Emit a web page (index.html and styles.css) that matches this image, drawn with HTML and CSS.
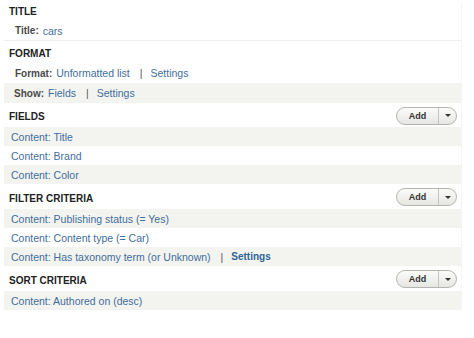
FILE: index.html
```html
<!DOCTYPE html>
<html lang="en">
  <head>
    <meta charset="UTF-8" />
    <title>Views</title>
    <link rel="stylesheet" href="styles.css">
  </head>

  <body>
    <div class="panel">
      <div class="bucket">
        <div class="bucket-head"><h3>TITLE</h3></div>
        <div class="row row-line indent"><b>Title:</b> <a href="#">cars</a></div>
      </div>

      <div class="bucket">
        <div class="bucket-head tall"><h3>FORMAT</h3></div>
        <div class="row wide indent"><b>Format:</b> <a href="#">Unformatted list</a><span class="sep">|</span><a href="#">Settings</a></div>
        <div class="row wide odd indent show"><b>Show:</b> <a href="#">Fields</a><span class="sep">|</span><a href="#">Settings</a></div>
      </div>

      <div class="bucket">
        <div class="bucket-head btn-head first">
          <h3>FIELDS</h3>
          <div class="dropbutton"><span class="drop-main">Add</span><span class="drop-arrow"></span></div>
        </div>
        <div class="row odd"><a href="#">Content: Title</a></div>
        <div class="row"><a href="#">Content: Brand</a></div>
        <div class="row odd"><a href="#">Content: Color</a></div>
      </div>

      <div class="bucket">
        <div class="bucket-head btn-head">
          <h3>FILTER CRITERIA</h3>
          <div class="dropbutton"><span class="drop-main">Add</span><span class="drop-arrow"></span></div>
        </div>
        <div class="row odd"><a href="#">Content: Publishing status (= Yes)</a></div>
        <div class="row"><a href="#">Content: Content type (= Car)</a></div>
        <div class="row odd"><a href="#">Content: Has taxonomy term (or Unknown)</a><span class="sep">|</span><a href="#" class="strong">Settings</a></div>
      </div>

      <div class="bucket">
        <div class="bucket-head btn-head">
          <h3>SORT CRITERIA</h3>
          <div class="dropbutton"><span class="drop-main">Add</span><span class="drop-arrow"></span></div>
        </div>
        <div class="row odd"><a href="#">Content: Authored on (desc)</a></div>
      </div>
    </div>
  </body>
</html>
```

FILE: styles.css
```css
* {
  margin: 0;
  padding: 0;
  box-sizing: border-box;
}

body {
  background: #fff;
  font-family: "Liberation Sans", Arial, sans-serif;
  font-size: 10.5px;
  color: #333;
}

.panel {
  width: 458px;
  margin: 2px 0 0 4px;
  border-right: 1px solid #f4f4f2;
}

.bucket-head {
  display: flex;
  align-items: center;
  justify-content: space-between;
  height: 19px;
  padding: 0 4px 0 5px;
  background: #fff;
}

.bucket-head.tall {
  height: 22px;
  padding-top: 2px;
}

.bucket-head.btn-head {
  height: 25px;
  padding-top: 1px;
}

.bucket-head.btn-head.first {
  height: 24px;
}

.bucket-head h3 {
  font-size: 10px;
  font-weight: bold;
  color: #222;
}

.btn-head h3 {
  margin-top: 2px;
}

.row {
  display: flex;
  align-items: center;
  height: 19px;
  padding-left: 7px;
  background: #fff;
}

.row.wide {
  height: 20px;
}

.row.odd {
  background: #f3f3ef;
}

.row.indent {
  padding-left: 11px;
}

.row.show {
  padding-left: 10px;
}

.row-line {
  border-bottom: 1px solid #eeeeea;
  height: 20px;
}

.row b {
  font-size: 10px;
  color: #4a4a4a;
  margin-right: 4px;
}

a {
  color: #3f6e9d;
  text-decoration: none;
}

a.strong {
  font-size: 10px;
  font-weight: bold;
  color: #2f6497;
}

.sep {
  color: #555;
  margin: 0 8px 0 10px;
}

.dropbutton {
  display: flex;
  height: 18px;
  border: 1px solid #b4b4b0;
  border-radius: 9px;
  background: linear-gradient(#fbfbfa, #e6e6e3);
}

.drop-main {
  width: 42px;
  display: flex;
  align-items: center;
  justify-content: center;
  font-weight: bold;
  font-size: 9px;
  color: #333;
  border-right: 1px solid #c4c4c0;
}

.drop-arrow {
  width: 17px;
  display: flex;
  align-items: center;
  justify-content: center;
}

.drop-arrow::after {
  content: "";
  border-left: 3px solid transparent;
  border-right: 3px solid transparent;
  border-top: 3px solid #333;
}
```
